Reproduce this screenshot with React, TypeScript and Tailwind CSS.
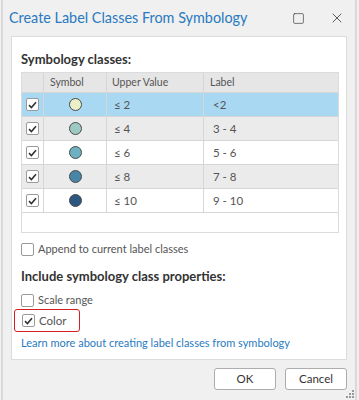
import { Square, X } from 'lucide-react'

const rows = [
  { value: '≤ 2', label: '<2', color: '#eaf0c8', bg: 'bg-[#a9d8f3]' },
  { value: '≤ 4', label: '3 - 4', color: '#9ec9c3', bg: 'bg-[#ebebeb]' },
  { value: '≤ 6', label: '5 - 6', color: '#6cb0c1', bg: 'bg-white' },
  { value: '≤ 8', label: '7 - 8', color: '#4886a6', bg: 'bg-[#ebebeb]' },
  { value: '≤ 10', label: '9 - 10', color: '#2c5781', bg: 'bg-white' },
]

function Check({ checked }: { checked: boolean }) {
  return (
    <div className="w-[13px] h-[13px] border border-[#9a9a9a] rounded-[2px] bg-white flex items-center justify-center">
      {checked && (
        <svg width="9" height="8" viewBox="0 0 9 8">
          <path d="M1 4.2 L3.4 6.5 L8 1.2" fill="none" stroke="#333" strokeWidth="1.6" />
        </svg>
      )}
    </div>
  )
}

function App() {
  return (
    <div
      className="w-[359px] h-[400px] bg-[#f0f0f0] overflow-hidden"
      style={{ fontFamily: 'Lato, "Open Sans", sans-serif' }}
    >
      <div className="ml-[1px] w-[356px] h-[400px] border-x-2 border-[#d9d9d9] flex flex-col">
        {/* title bar */}
        <div className="h-[36px] flex items-center pl-[6px] pr-[10px]">
          <div className="text-[14.4px] text-[#2a7ac0] flex-1">Create Label Classes From Symbology</div>
          <Square size={13} strokeWidth={1.2} className="text-[#333] mr-[24px]" />
          <X size={16} strokeWidth={1.2} className="text-[#333]" />
        </div>

        {/* content panel */}
        <div className="mx-[8px] h-[324px] bg-white border border-[#dcdcdc] px-[9px] pt-[10px]">
          <div className="text-[13px] font-bold text-[#333] h-[25px] flex items-center">Symbology classes:</div>

          <div className="w-[318px] h-[161px] border border-[#dcdcdc] text-[10.5px] text-[#555]">
            <div className="flex h-[20px] bg-[#e6e6e6] border-b border-[#d6d6d6]">
              <div className="w-[22px] border-r border-[#d6d6d6]" />
              <div className="w-[63px] border-r border-[#d6d6d6] flex items-center pl-[6px]">Symbol</div>
              <div className="w-[97px] border-r border-[#d6d6d6] flex items-center pl-[5px]">Upper Value</div>
              <div className="flex-1 flex items-center pl-[6px]">Label</div>
            </div>
            {rows.map((r) => (
              <div key={r.value} className={`flex h-[24px] border-b border-[#d6d6d6] ${r.bg}`}>
                <div className="w-[22px] border-r border-[#d6d6d6] flex items-center justify-center">
                  <Check checked />
                </div>
                <div className="w-[63px] border-r border-[#d6d6d6] flex items-center justify-center">
                  <div className="w-[13px] h-[13px] rounded-full border border-[#4a4a4a]" style={{ backgroundColor: r.color }} />
                </div>
                <div className="w-[97px] border-r border-[#d6d6d6] flex items-center pl-[7px] text-[11.5px]">{r.value}</div>
                <div className="flex-1 flex items-center pl-[9px] text-[11.5px]">{r.label}</div>
              </div>
            ))}
          </div>

          <div className="mt-[8px] h-[16px] flex items-center gap-[4px] text-[11px] text-[#555]">
            <Check checked={false} />
            <span>Append to current label classes</span>
          </div>

          <div className="mt-[10px] h-[20px] flex items-center text-[13px] font-bold text-[#333]">Include symbology class properties:</div>

          <div className="mt-[5px] h-[16px] flex items-center gap-[4px] text-[11px] text-[#555]">
            <Check checked={false} />
            <span>Scale range</span>
          </div>

          <div className="mt-[1px] -ml-[7px] w-[66px] h-[23px] border border-[#d42020] rounded-[3px] flex items-center gap-[4px] pl-[7px] text-[11.5px] text-[#555]">
            <Check checked />
            <span>Color</span>
          </div>

          <div className="mt-[3px] h-[16px] flex items-center text-[11px] text-[#2a7ac0]">Learn more about creating label classes from symbology</div>
        </div>

        {/* buttons */}
        <div className="flex justify-end gap-[9px] pr-[8px] pt-[8px] relative flex-1">
          <button className="w-[62px] h-[22px] border border-[#adadad] rounded-[3px] bg-white text-[11.5px] text-[#333]">OK</button>
          <button className="w-[62px] h-[22px] border border-[#adadad] rounded-[3px] bg-white text-[11.5px] text-[#333]">Cancel</button>
          <div className="absolute right-[1px] bottom-[2px] grid grid-cols-3 gap-[1px]">
            <div />
            <div />
            <div className="w-[2px] h-[2px] bg-[#999]" />
            <div />
            <div className="w-[2px] h-[2px] bg-[#999]" />
            <div className="w-[2px] h-[2px] bg-[#999]" />
            <div className="w-[2px] h-[2px] bg-[#999]" />
            <div className="w-[2px] h-[2px] bg-[#999]" />
            <div className="w-[2px] h-[2px] bg-[#999]" />
          </div>
        </div>
      </div>
    </div>
  )
}

export default App
